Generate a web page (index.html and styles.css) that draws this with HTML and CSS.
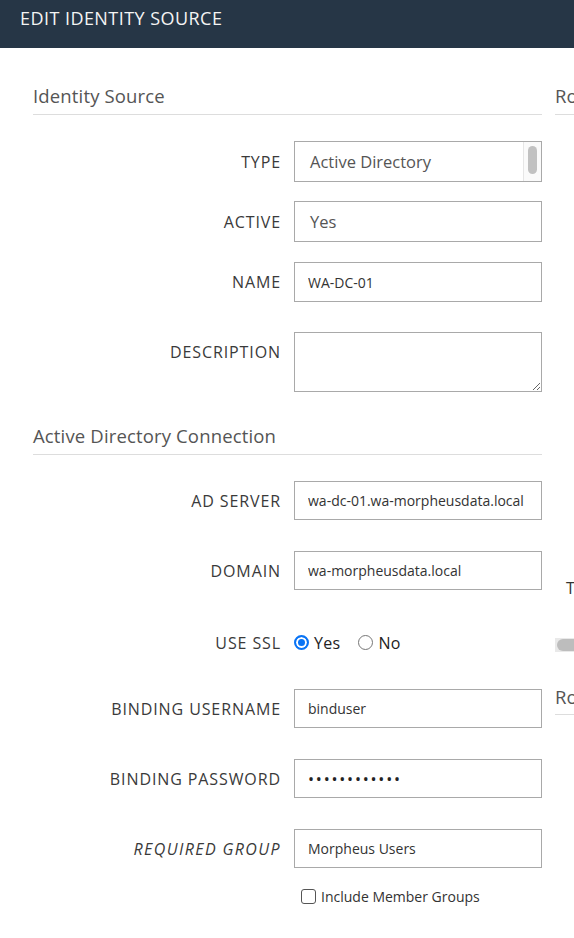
FILE: index.html
```html
<!DOCTYPE html>
<html lang="en">
<head>
<meta charset="utf-8">
<title>Edit Identity Source</title>
<link rel="stylesheet" href="styles.css">
</head>
<body>
<header class="topbar">EDIT IDENTITY SOURCE</header>
<div class="page">
  <div class="main">
    <h2 class="section-title">Identity Source</h2>
    <div class="form">
      <div class="row r-type">
        <label class="lbl">TYPE</label>
        <div class="listbox">
          <span class="listbox-value">Active Directory</span>
          <span class="listbox-track"><span class="listbox-thumb"></span></span>
        </div>
      </div>
      <div class="row r-active">
        <label class="lbl">ACTIVE</label>
        <div class="selectbox">Yes</div>
      </div>
      <div class="row r-name">
        <label class="lbl">NAME</label>
        <input class="field" type="text" value="WA-DC-01">
      </div>
      <div class="row r-desc">
        <label class="lbl lbl-top">DESCRIPTION</label>
        <textarea class="area"></textarea>
      </div>
    </div>

    <h2 class="section-title second">Active Directory Connection</h2>
    <div class="form">
      <div class="row r-conn">
        <label class="lbl">AD SERVER</label>
        <input class="field" type="text" value="wa-dc-01.wa-morpheusdata.local">
      </div>
      <div class="row r-conn">
        <label class="lbl">DOMAIN</label>
        <input class="field" type="text" value="wa-morpheusdata.local">
      </div>
      <div class="row r-ssl">
        <label class="lbl">USE SSL</label>
        <div class="radios">
          <span class="radio-opt"><span class="radio on"></span>Yes</span>
          <span class="radio-opt"><span class="radio"></span>No</span>
        </div>
      </div>
      <div class="row r-conn">
        <label class="lbl">BINDING USERNAME</label>
        <input class="field" type="text" value="binduser">
      </div>
      <div class="row r-conn">
        <label class="lbl">BINDING PASSWORD</label>
        <input class="field pw" type="password" value="secretpass12">
      </div>
      <div class="row r-group">
        <label class="lbl lbl-italic">REQUIRED GROUP</label>
        <input class="field" type="text" value="Morpheus Users">
      </div>
      <div class="row r-check">
        <span></span>
        <span class="check-opt"><span class="checkbox"></span>Include Member Groups</span>
      </div>
    </div>
  </div>

  <aside class="side">
    <h2 class="section-title">Role Mappings</h2>
    <div class="side-label">Tenant Role</div>
    <div class="toggle"><span class="toggle-knob"></span></div>
    <h2 class="section-title side-second">Role Mappings</h2>
  </aside>
</div>
</body>
</html>
```

FILE: styles.css
```css
* { box-sizing: border-box; }

html, body {
  margin: 0;
  padding: 0;
  background: #fff;
  overflow: hidden;
}

body {
  font-family: "Open Sans", Lato, "Noto Sans", sans-serif;
  color: #333;
  width: 574px;
  height: 938px;
}

.topbar {
  height: 48px;
  background: #263646;
  color: #f4f4f4;
  font-size: 18px;
  letter-spacing: 0.45px;
  line-height: 36px;
  padding-left: 20px;
}

.page {
  display: flex;
  gap: 13px;
  padding-left: 33px;
  width: 900px;
}

.main {
  width: 509px;
  flex: none;
}

.side {
  width: 300px;
  flex: none;
}

.section-title {
  margin: 36px 0 0;
  font-size: 18.5px;
  font-weight: 400;
  letter-spacing: 0.15px;
  line-height: 24px;
  color: #555;
  padding-bottom: 6px;
  border-bottom: 1px solid #ddd;
}

.section-title.second {
  margin-top: 32px;
}

.form {
  margin-top: 26px;
}

.row {
  display: grid;
  grid-template-columns: 248px 248px;
  column-gap: 13px;
}

.lbl {
  text-align: right;
  font-size: 16px;
  font-weight: 400;
  letter-spacing: 0.9px;
  color: #3a3a3a;
  align-self: center;
}

.lbl-top {
  align-self: start;
  padding-top: 9px;
}

.lbl-italic {
  font-style: italic;
  letter-spacing: 1.4px;
}

.r-type { height: 41px; margin-bottom: 19px; }
.r-active { height: 41px; margin-bottom: 20px; }
.r-name { height: 40px; margin-bottom: 30px; }
.r-desc { height: 60px; }
.r-conn { height: 39px; margin-bottom: 31px; }
.r-ssl { height: 39px; margin-bottom: 29px; padding-top: 4px; }
.r-group { height: 39px; margin-bottom: 19px; }

.listbox,
.selectbox,
.field,
.area {
  border: 1px solid #a9a9a9;
  background: #fff;
  margin: 0;
}

.listbox {
  display: flex;
  align-items: center;
  height: 41px;
  font-size: 16.5px;
  color: #555;
}

.listbox-value {
  flex: 1;
  padding-left: 15px;
}

.listbox-track {
  width: 18px;
  height: 100%;
  border-left: 1px solid #e6e6e6;
  background: #fafafa;
  display: flex;
  justify-content: center;
  padding-top: 4px;
}

.listbox-thumb {
  width: 9px;
  height: 28px;
  border-radius: 5px;
  background: #c1c1c1;
}

.selectbox {
  height: 41px;
  font-size: 16.5px;
  color: #555;
  line-height: 39px;
  padding-left: 15px;
}

.field {
  height: 100%;
  width: 248px;
  font-family: "Open Sans", Lato, "Noto Sans", sans-serif;
  font-size: 14px;
  color: #333;
  padding: 0 13px;
  outline: none;
}

.field.pw {
  font-size: 16px;
  letter-spacing: 1.8px;
  color: #222;
}

.area {
  width: 248px;
  height: 60px;
  font-family: inherit;
  font-size: 14px;
  padding: 8px 13px;
  outline: none;
}

.radios {
  display: flex;
  align-items: center;
  gap: 18px;
  font-size: 16px;
  letter-spacing: 0.3px;
  color: #222;
}

.radio-opt {
  display: flex;
  align-items: center;
  gap: 5px;
}

.radio {
  width: 15px;
  height: 15px;
  border-radius: 50%;
  border: 1px solid #767676;
  background: #fff;
  display: inline-block;
}

.radio.on {
  border: 2px solid #0a74f5;
  background: #0a74f5;
  box-shadow: inset 0 0 0 2px #fff;
}

.r-check {
  height: 16px;
  margin-top: 1px;
}

.check-opt {
  display: flex;
  align-items: center;
  gap: 5px;
  padding-left: 7px;
  font-size: 14px;
  color: #333;
}

.checkbox {
  width: 15px;
  height: 15px;
  border: 1px solid #555;
  border-radius: 3px;
  background: #fff;
  display: inline-block;
}

.side-label {
  margin-top: 463px;
  padding-left: 11px;
  font-size: 16px;
  line-height: 20px;
  color: #333;
}

.toggle {
  margin-top: 40px;
  width: 40px;
  height: 14px;
  background: #e9e9e9;
  padding-left: 2px;
  display: flex;
  align-items: center;
}

.toggle-knob {
  width: 26px;
  height: 12px;
  border-radius: 6px;
  background: #bdbdbd;
}

.section-title.side-second {
  margin-top: 33px;
  padding-bottom: 5px;
}
```
